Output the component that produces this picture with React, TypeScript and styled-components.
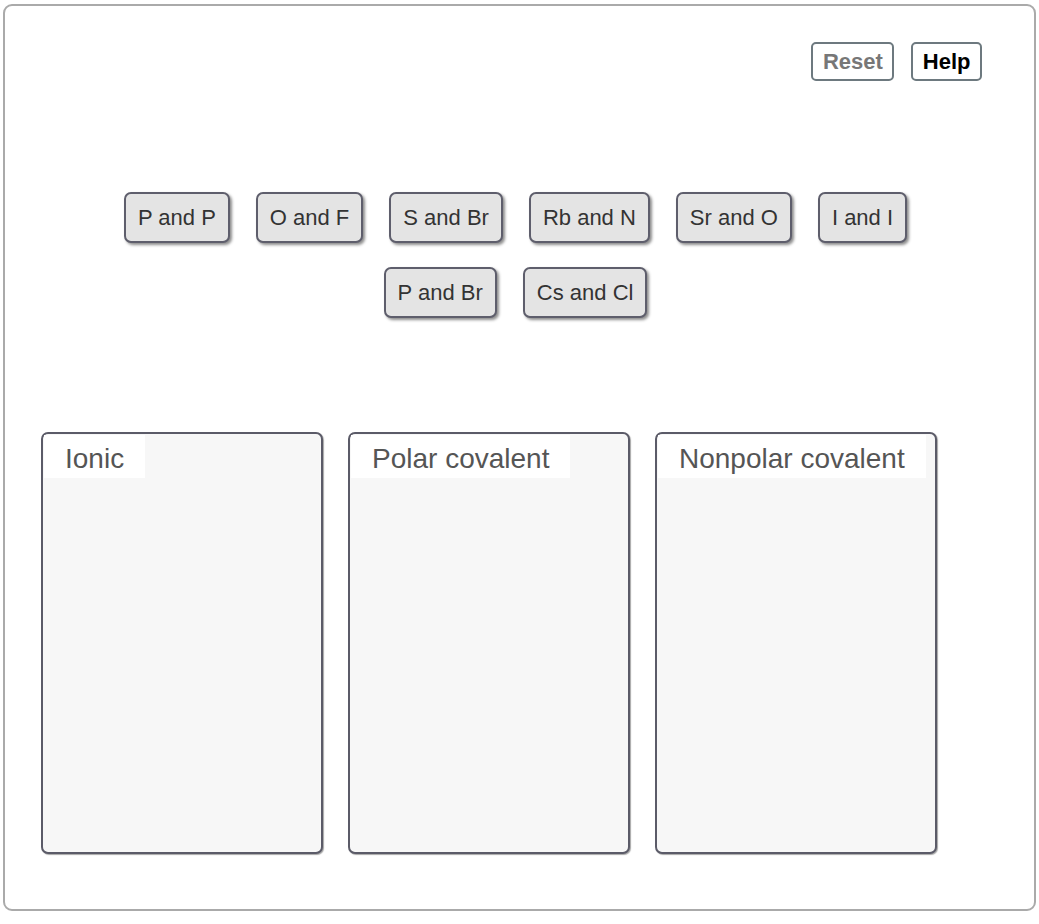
import React from "react";
import styled, { createGlobalStyle } from "styled-components";

const Global = createGlobalStyle`
  html, body { margin: 0; padding: 0; background: #fff; }
  body { font-family: "Liberation Sans", Arial, sans-serif; }
  * { box-sizing: border-box; }
`;

const Page = styled.div`
  padding: 4px 3px;
  width: 1039px;
`;

const Frame = styled.div`
  width: 1033px;
  height: 907px;
  border: 2px solid #aaaaaa;
  border-radius: 9px;
  display: flex;
  flex-direction: column;
`;

const Toolbar = styled.div`
  display: flex;
  justify-content: flex-end;
  gap: 17px;
  margin-top: 36px;
  padding-right: 52px;
`;

const ToolButton = styled.button<{ $muted?: boolean }>`
  height: 39px;
  padding: 0 9.5px;
  border: 2px solid #6d797f;
  border-radius: 5px;
  background: #fff;
  font-family: "Liberation Sans", Arial, sans-serif;
  font-weight: bold;
  font-size: 22px;
  color: ${(p) => (p.$muted ? "#777777" : "#000000")};
  cursor: pointer;
`;

const ChipArea = styled.div`
  margin: 111px auto 0;
  width: 810px;
  padding-left: 2px;
  padding-right: 10px;
  display: flex;
  flex-wrap: wrap;
  justify-content: center;
  column-gap: 26px;
  row-gap: 24px;
`;

const Chip = styled.div`
  height: 51px;
  padding: 0 12px;
  display: flex;
  align-items: center;
  border: 2px solid #5e5e6c;
  border-radius: 7px;
  background: #e4e4e4;
  box-shadow: 2px 2px 3px rgba(0, 0, 0, 0.45);
  font-size: 22px;
  color: #333333;
`;

const Bins = styled.div`
  display: flex;
  gap: 25px;
  margin-top: 114px;
  padding-left: 36px;
`;

const Bin = styled.div`
  width: 282px;
  height: 422px;
  border: 2px solid #5b5b68;
  border-radius: 7px;
  background: #f7f7f7;
  box-shadow: 1px 1px 1px rgba(0, 0, 0, 0.35);
  padding: 1px;
  display: flex;
  flex-direction: column;
  align-items: flex-start;
`;

const BinLabel = styled.div`
  height: 43px;
  padding: 5px 21px 0 21px;
  display: flex;
  align-items: center;
  background: #ffffff;
  font-size: 28px;
  color: #555555;
`;

const chips = ["P and P", "O and F", "S and Br", "Rb and N", "Sr and O", "I and I", "P and Br", "Cs and Cl"];
const bins = ["Ionic", "Polar covalent", "Nonpolar covalent"];

export default function App() {
  return (
    <Page>
      <Global />
      <Frame>
        <Toolbar>
          <ToolButton $muted>Reset</ToolButton>
          <ToolButton>Help</ToolButton>
        </Toolbar>
        <ChipArea>
          {chips.map((c) => (
            <Chip key={c}>{c}</Chip>
          ))}
        </ChipArea>
        <Bins>
          {bins.map((b) => (
            <Bin key={b}>
              <BinLabel>{b}</BinLabel>
            </Bin>
          ))}
        </Bins>
      </Frame>
    </Page>
  );
}
